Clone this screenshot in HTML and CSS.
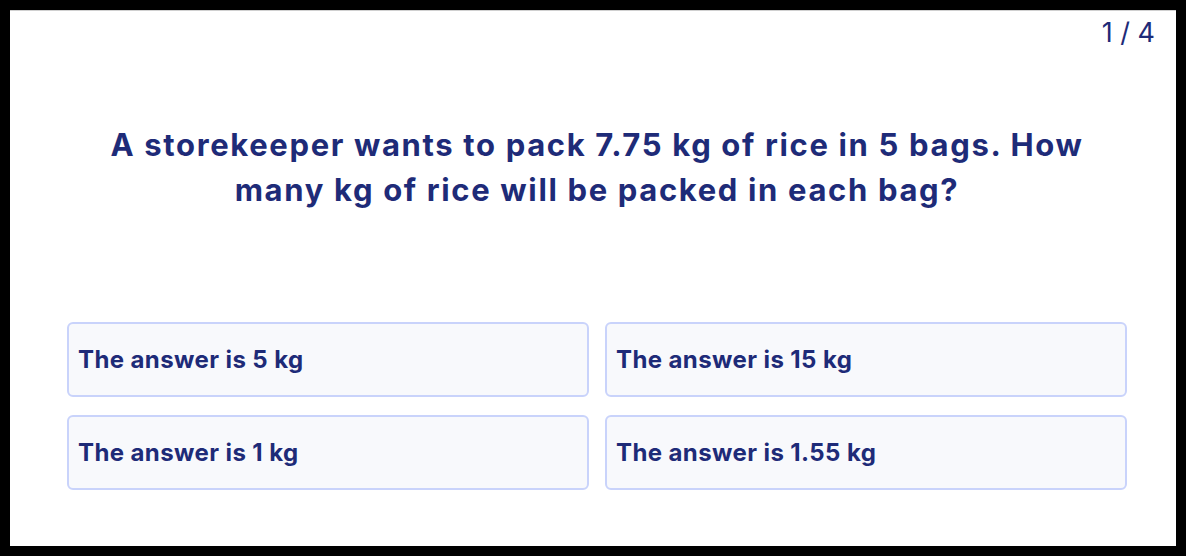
FILE: index.html
```html
<!DOCTYPE html>
<html lang="en">
<head>
<meta charset="utf-8">
<title>Quiz</title>
<link rel="stylesheet" href="styles.css">
</head>
<body>
<div class="card">
  <div class="header"><span class="counter">1 / 4</span></div>
  <div class="content">
    <h1 class="question">A storekeeper wants to pack 7.75 kg of rice in 5 bags. How many kg of rice will be packed in each bag?</h1>
    <div class="options">
      <div class="option">The answer is 5 kg</div>
      <div class="option">The answer is 15 kg</div>
      <div class="option">The answer is 1 kg</div>
      <div class="option">The answer is 1.55 kg</div>
    </div>
  </div>
</div>
</body>
</html>
```

FILE: styles.css
```css
html, body {
  margin: 0;
  padding: 0;
}
body {
  background: #000;
  padding: 10px;
  width: 1166px;
  height: 536px;
  font-family: Inter, "Noto Sans", sans-serif;
  color: #1e2b78;
}
.card {
  background: #fff;
  border-top: 1px solid #d0d0d0;
  height: 535px;
  padding: 0 21px 0 57px;
  box-sizing: content-box;
  width: 1088px;
}
.header {
  display: flex;
  justify-content: flex-end;
  padding-top: 2px;
}
.counter {
  font-size: 27px;
  line-height: 40px;
  font-weight: 400;
}
.content {
  margin-right: 28px;
}
.question {
  margin: 69px 0 0;
  text-align: center;
  font-size: 31px;
  line-height: 45px;
  font-weight: 700;
  letter-spacing: 1.65px;
  padding: 0 25px;
}
.options {
  margin-top: 110px;
  display: grid;
  grid-template-columns: 1fr 1fr;
  column-gap: 16px;
  row-gap: 18px;
}
.option {
  height: 75px;
  box-sizing: border-box;
  border: 2px solid #c9d3fb;
  border-radius: 6px;
  background: #f8f9fc;
  display: flex;
  align-items: center;
  padding-left: 9px;
  font-size: 24px;
  font-weight: 700;
  letter-spacing: 0.4px;
}
```
